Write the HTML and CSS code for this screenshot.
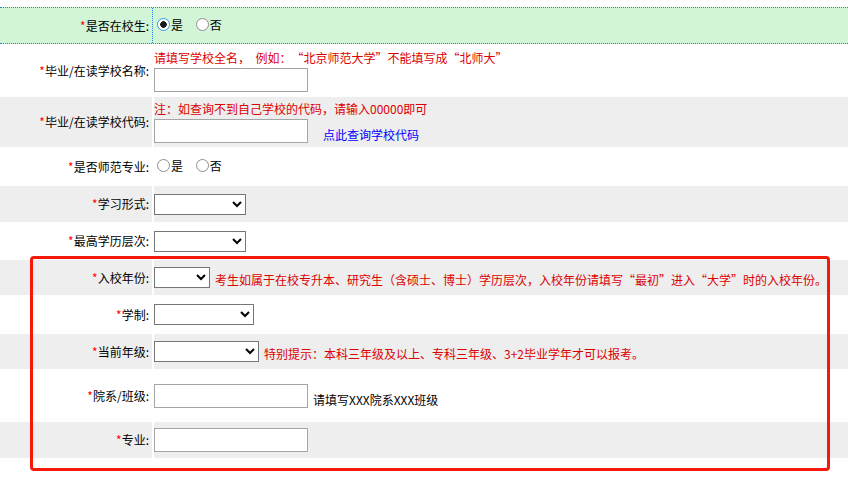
FILE: index.html
```html
<!DOCTYPE html>
<html lang="zh-CN">
<head>
  <meta charset="UTF-8">
  <title>学籍信息</title>
  <link rel="stylesheet" href="styles.css">
</head>
<body>

  <div class="form">
    <div class="row current h-37">
      <div class="label"><span class="req">*</span>是否在校生:</div>
      <div class="field">
        <div class="line">
          <label class="opt"><input type="radio" name="zaixiao" checked>是</label>
          <label class="opt"><input type="radio" name="zaixiao">否</label>
        </div>
      </div>
    </div>

    <div class="row h-53">
      <div class="label"><span class="req">*</span>毕业/在读学校名称:</div>
      <div class="field">
        <div class="hint">请填写学校全名，&nbsp;&nbsp;例如：<span class="q open">“</span>北京师范大学<span class="q">”</span>不能填写成<span class="q open">“</span>北师大<span class="q">”</span></div>
        <div class="line"><input type="text" class="text"></div>
      </div>
    </div>

    <div class="row gray h-50">
      <div class="label"><span class="req">*</span>毕业/在读学校代码:</div>
      <div class="field">
        <div class="hint">注：如查询不到自己学校的代码，请输入00000即可</div>
        <div class="line"><input type="text" class="text"><a href="#" class="lookup">点此查询学校代码</a></div>
      </div>
    </div>

    <div class="row h-39">
      <div class="label"><span class="req">*</span>是否师范专业:</div>
      <div class="field">
        <div class="line">
          <label class="opt"><input type="radio" name="shifan">是</label>
          <label class="opt"><input type="radio" name="shifan">否</label>
        </div>
      </div>
    </div>

    <div class="row gray h-36">
      <div class="label"><span class="req">*</span>学习形式:</div>
      <div class="field">
        <div class="line"><select class="sel w-92"><option></option></select></div>
      </div>
    </div>

    <div class="row h-38">
      <div class="label"><span class="req">*</span>最高学历层次:</div>
      <div class="field">
        <div class="line"><select class="sel w-92"><option></option></select></div>
      </div>
    </div>

    <div class="group">
      <div class="row gray h-35">
        <div class="label"><span class="req">*</span>入校年份:</div>
        <div class="field">
          <div class="line"><select class="sel w-56"><option></option></select><span class="note">考生如属于在校专升本、研究生（含硕士、博士）学历层次，入校年份请填写<span class="q open">“</span>最初<span class="q">”</span>进入<span class="q open">“</span>大学<span class="q">”</span>时的入校年份。</span></div>
        </div>
      </div>

      <div class="row h-39">
        <div class="label"><span class="req">*</span>学制:</div>
        <div class="field">
          <div class="line"><select class="sel w-100"><option></option></select></div>
        </div>
      </div>

      <div class="row gray h-35">
        <div class="label"><span class="req">*</span>当前年级:</div>
        <div class="field">
          <div class="line"><select class="sel w-105"><option></option></select><span class="note">特别提示：本科三年级及以上、专科三年级、3+2毕业学年才可以报考。</span></div>
        </div>
      </div>

      <div class="row h-53">
        <div class="label"><span class="req">*</span>院系/班级:</div>
        <div class="field">
          <div class="line"><input type="text" class="text"><span class="tip">请填写XXX院系XXX班级</span></div>
        </div>
      </div>

      <div class="row gray h-36">
        <div class="label"><span class="req">*</span>专业:</div>
        <div class="field">
          <div class="line"><input type="text" class="text"></div>
        </div>
      </div>

      <div class="highlight"></div>
    </div>
  </div>

</body>
</html>
```

FILE: styles.css
```css
body {
  margin: 0;
  font-family: "Noto Sans CJK SC", sans-serif;
  font-size: 12px;
  line-height: 16px;
  color: #000;
  background-color: #fff;
}

.form {
  padding-top: 7px;
  padding-bottom: 26px;
}

.row {
  display: flex;
  box-sizing: border-box;
}

.h-35 { height: 35px; }
.h-36 { height: 36px; }
.h-37 { height: 37px; }
.h-38 { height: 38px; }
.h-39 { height: 39px; }
.h-50 { height: 50px; }
.h-53 { height: 53px; }

.label {
  width: 152px;
  flex-shrink: 0;
  box-sizing: border-box;
  padding-right: 3px;
  display: flex;
  align-items: center;
  justify-content: flex-end;
}

.field {
  flex: 1;
  margin-left: 2px;
  display: flex;
  flex-direction: column;
  justify-content: center;
}

.row.gray .label,
.row.gray .field {
  background-color: #eee;
}

.row.current {
  background-color: #d2f4d7;
  border-top: 1px dotted #1c86e0;
  border-bottom: 1px dotted #1c86e0;
}

.row.current .label {
  width: 153px;
  border-right: 1px dotted #1c86e0;
}

.row.current .field {
  margin-left: 1px;
}

.req {
  color: #f00;
}

.hint {
  color: #d00;
  margin-bottom: 2px;
}

/* full width quotes, as in the Chinese system font */
.q {
  display: inline-block;
  width: 12px;
  text-align: left;
}

.q.open {
  text-align: right;
}

.line {
  white-space: nowrap;
}

.text {
  width: 154px;
  height: 24px;
  box-sizing: border-box;
  margin: 0;
  padding: 1px 4px;
  border: 1px solid #a5a5a5;
  font: inherit;
  vertical-align: bottom;
}

.sel {
  height: 21px;
  box-sizing: border-box;
  margin: 0;
  border: 1px solid #767676;
  border-radius: 0;
  background-color: #fff;
  font: inherit;
  vertical-align: bottom;
}

.w-56 { width: 56px; }
.w-92 { width: 92px; }
.w-100 { width: 100px; }
.w-105 { width: 105px; }

.note {
  color: #d00;
  margin-left: 5px;
}

.tip {
  margin-left: 5px;
}

.lookup {
  color: #00f;
  text-decoration: none;
  margin-left: 15px;
}

.opt {
  display: inline-flex;
  align-items: center;
  margin-right: 7px;
}

.opt input {
  appearance: none;
  width: 13px;
  height: 13px;
  margin: 0 1px 0 3px;
  border: 1px solid #8f8f8f;
  border-radius: 50%;
  background-color: #fff;
}

.opt input:checked {
  border-color: #3c9ae0;
  background: radial-gradient(circle, #1a1a1a 0 3px, #fff 3.6px);
}

.group {
  position: relative;
}

.highlight {
  position: absolute;
  top: -4px;
  left: 30px;
  right: 18px;
  bottom: -13px;
  border: 3px solid #f5190c;
  border-radius: 4px;
  pointer-events: none;
}
```
